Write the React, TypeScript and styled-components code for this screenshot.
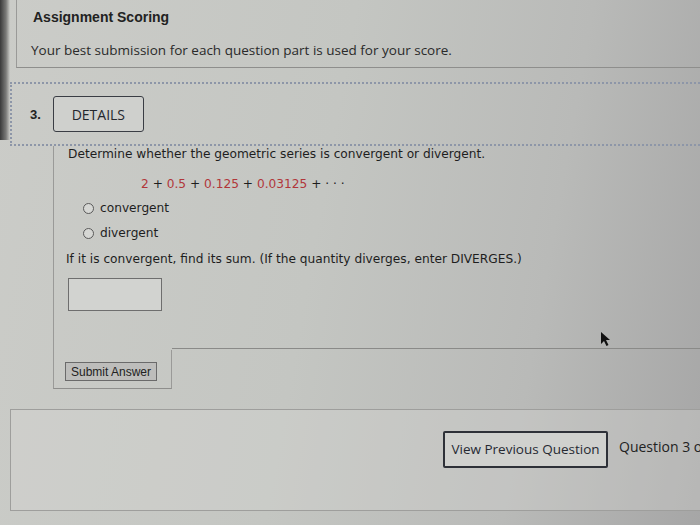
import React from "react";
import styled, { createGlobalStyle } from "styled-components";

const Global = createGlobalStyle`
  html, body { margin: 0; padding: 0; }
  body { width: 700px; height: 525px; overflow: hidden; }
`;

const Page = styled.div`
  position: relative;
  width: 700px;
  height: 525px;
  overflow: hidden;
  background: linear-gradient(100deg, #cbccc8 0%, #c4c6c2 45%, #b9bab8 75%, #a6a6a6 100%);
  color: #222;
  font-family: "Open Sans", sans-serif;
`;

const Bezel = styled.div`
  position: absolute;
  left: 0;
  top: 0;
  width: 10px;
  height: 140px;
  background: linear-gradient(90deg, #3a3a3a 0%, #7a7a78 60%, rgba(160,160,158,0) 100%);
`;

const ScoringBox = styled.section`
  margin-left: 16px;
  height: 68px;
  box-sizing: border-box;
  border-left: 1px solid #9a9a98;
  border-bottom: 1px solid #8e8e8c;
  padding: 9px 0 0 16px;
`;

const ScoringTitle = styled.h2`
  margin: 0;
  font-family: "Liberation Sans", Arial, sans-serif;
  font-weight: bold;
  font-size: 14px;
  line-height: 17px;
  color: #222;
`;

const ScoringText = styled.p`
  margin: 15px 0 0 -2px;
  font-size: 13.5px;
  line-height: 18px;
  color: #2a2a2a;
`;

const QuestionHeader = styled.div`
  margin: 14px 0 0 10px;
  height: 64px;
  box-sizing: border-box;
  border-top: 2px dotted #8d96a8;
  border-left: 2px dotted #8d96a8;
  border-bottom: 2px dotted #8d96a8;
  display: flex;
  align-items: center;
  padding: 0 0 0 18px;
  gap: 12px;
`;

const Number = styled.span`
  font-family: "Liberation Sans", Arial, sans-serif;
  font-weight: bold;
  font-size: 13px;
  color: #222;
`;

const DetailsButton = styled.button`
  width: 91px;
  height: 36px;
  box-sizing: border-box;
  border: 1.5px solid #3a3d44;
  border-radius: 3px;
  background: #cfd0cd;
  font-family: "Open Sans", sans-serif;
  font-size: 14px;
  color: #24272d;
  padding: 0;
`;

const QuestionBody = styled.div`
  margin-left: 53px;
  height: 204px;
  box-sizing: border-box;
  border-left: 1px solid #9a9a98;
  padding: 1px 0 0 14px;
  font-family: "DejaVu Sans", Verdana, sans-serif;
  font-size: 12.2px;
  color: #1e1e1e;
`;

const Line = styled.p<{ $indent?: number; $top?: number }>`
  margin: ${(p) => p.$top ?? 0}px 0 0 ${(p) => p.$indent ?? 0}px;
  line-height: 15px;
  white-space: nowrap;
`;

const Series = styled.p`
  margin: 15px 0 0 73px;
  line-height: 15px;
  font-size: 12.2px;
`;

const Red = styled.span`
  color: #b1363a;
`;

const RadioRow = styled.label<{ $top: number }>`
  display: flex;
  align-items: center;
  gap: 6px;
  margin: ${(p) => p.$top}px 0 0 15px;
  line-height: 15px;
`;

const RadioCircle = styled.span`
  width: 11px;
  height: 11px;
  box-sizing: border-box;
  border: 1px solid #5a5a5a;
  border-radius: 50%;
  background: #d6d7d4;
`;

const AnswerInput = styled.div`
  margin: 11px 0 0 0;
  width: 94px;
  height: 33px;
  box-sizing: border-box;
  border: 1px solid #6e6e6e;
  background: #d2d3d0;
`;

const Footer = styled.div`
  display: flex;
  margin-left: 53px;
`;

const SubmitCell = styled.div`
  width: 119px;
  height: 39px;
  box-sizing: border-box;
  border-left: 1px solid #9a9a98;
  border-bottom: 1px solid #8e8e8c;
  border-right: 1px solid #9a9a98;
  display: flex;
  align-items: flex-end;
  padding: 0 0 7px 11px;
`;

const Rest = styled.div`
  flex: 1;
  margin-top: -2px;
  border-top: 1px solid #8a8a88;
`;

const SubmitButton = styled.button`
  height: 19px;
  padding: 0 5px;
  box-sizing: border-box;
  border: 1px solid #6a6a6a;
  background: #bdbdbb;
  font-family: "Liberation Sans", Arial, sans-serif;
  font-size: 12px;
  color: #222;
`;

const NavPanel = styled.div`
  margin: 20px 0 0 10px;
  height: 102px;
  box-sizing: border-box;
  border: 1px solid #9e9e9c;
  border-right: none;
  background: rgba(215, 216, 212, 0.35);
  display: flex;
  align-items: center;
  padding: 0 0 22px 432px;
  gap: 11px;
  white-space: nowrap;
`;

const PrevButton = styled.button`
  width: 165px;
  height: 37px;
  flex-shrink: 0;
  box-sizing: border-box;
  border: 2px solid #2e3138;
  border-radius: 2px;
  background: #d0d1ce;
  font-family: "Open Sans", sans-serif;
  font-size: 13.5px;
  color: #262932;
  padding: 0;
`;

const QuestionCount = styled.span`
  font-size: 14px;
  color: #222;
  margin-top: -6px;
`;

const Cursor = styled.svg`
  position: absolute;
  left: 600px;
  top: 331px;
`;

export default function App() {
  return (
    <Page>
      <Global />
      <Bezel />
      <ScoringBox>
        <ScoringTitle>Assignment Scoring</ScoringTitle>
        <ScoringText>Your best submission for each question part is used for your score.</ScoringText>
      </ScoringBox>
      <QuestionHeader>
        <Number>3.</Number>
        <DetailsButton>DETAILS</DetailsButton>
      </QuestionHeader>
      <QuestionBody>
        <Line>Determine whether the geometric series is convergent or divergent.</Line>
        <Series>
          <Red>2</Red> + <Red>0.5</Red> + <Red>0.125</Red> + <Red>0.03125</Red> + · · ·
        </Series>
        <RadioRow $top={9}>
          <RadioCircle />
          convergent
        </RadioRow>
        <RadioRow $top={10}>
          <RadioCircle />
          divergent
        </RadioRow>
        <Line $top={11} $indent={-2}>
          If it is convergent, find its sum. (If the quantity diverges, enter DIVERGES.)
        </Line>
        <AnswerInput />
      </QuestionBody>
      <Footer>
        <SubmitCell>
          <SubmitButton>Submit Answer</SubmitButton>
        </SubmitCell>
        <Rest />
      </Footer>
      <NavPanel>
        <PrevButton>View Previous Question</PrevButton>
        <QuestionCount>Question 3 of 10</QuestionCount>
      </NavPanel>
      <Cursor width="12" height="16" viewBox="0 0 12 16">
        <path d="M1 1 L1 13 L4 10 L6.5 15 L8.5 14 L6 9 L10 9 Z" fill="#111" />
      </Cursor>
    </Page>
  );
}
